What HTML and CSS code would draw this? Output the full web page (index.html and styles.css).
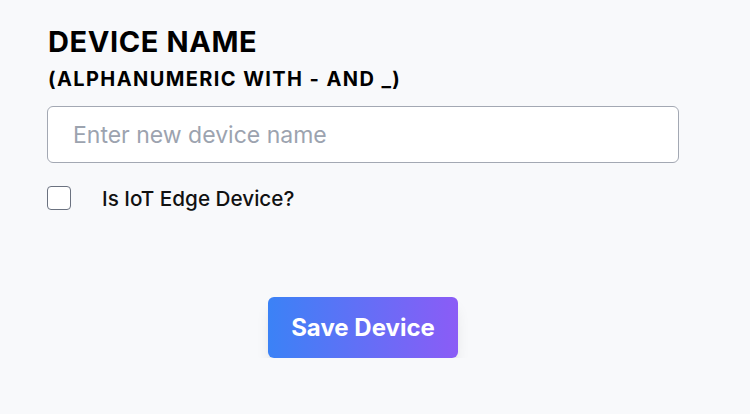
FILE: index.html
```html
<!DOCTYPE html>
<html lang="en">
<head>
<meta charset="utf-8">
<link rel="stylesheet" href="styles.css">
</head>
<body>
<form class="form">
  <label class="title" for="name">DEVICE NAME</label>
  <div class="subtitle">(ALPHANUMERIC WITH - AND _)</div>
  <input id="name" class="input" type="text" placeholder="Enter new device name">
  <label class="check-row">
    <input type="checkbox" class="check">
    <span class="check-label">Is IoT Edge Device?</span>
  </label>
  <div class="actions">
    <button type="button" class="btn">Save Device</button>
  </div>
</form>
</body>
</html>
```
FILE: styles.css
```css
html, body {
  margin: 0;
  padding: 0;
  background: #f8f9fb;
  font-family: Inter, "Noto Sans", sans-serif;
  color: #000;
}
.form {
  width: 632px;
  margin-left: 47px;
  padding-top: 24px;
  display: flex;
  flex-direction: column;
}
.title {
  font-size: 29px;
  font-weight: 700;
  line-height: 36px;
  letter-spacing: 0.6px;
  padding-left: 1px;
}
.subtitle {
  font-size: 20px;
  font-weight: 700;
  line-height: 26px;
  letter-spacing: 1.4px;
  padding-left: 1px;
  margin-top: 6px;
}
.input {
  box-sizing: border-box;
  margin: 14px 0 0 0;
  height: 57px;
  width: 632px;
  border: 1.5px solid #a3a8b3;
  border-radius: 6px;
  background: #fff;
  padding: 0 25px;
  font-family: inherit;
  font-size: 23px;
  color: #111;
  outline: none;
}
.input::placeholder {
  color: #9ca3af;
}
.check-row {
  display: flex;
  align-items: center;
  margin-top: 23px;
  height: 24px;
}
.check {
  appearance: none;
  -webkit-appearance: none;
  box-sizing: border-box;
  margin: 0;
  width: 24px;
  height: 24px;
  border: 1.5px solid #6b7280;
  border-radius: 4px;
  background: #fff;
}
.check-label {
  margin-left: 31px;
  font-size: 20.7px;
  font-weight: 500;
  color: #111;
}
.actions {
  display: flex;
  justify-content: center;
  margin-top: 87px;
}
.btn {
  width: 190px;
  height: 61px;
  border: none;
  border-radius: 6px;
  background: linear-gradient(90deg, #3b82f6, #8b5cf6);
  color: #fff;
  font-family: inherit;
  font-size: 24px;
  font-weight: 700;
  box-shadow: 0 10px 15px -3px rgba(0,0,0,0.1), 0 4px 6px -4px rgba(0,0,0,0.1);
}
```
